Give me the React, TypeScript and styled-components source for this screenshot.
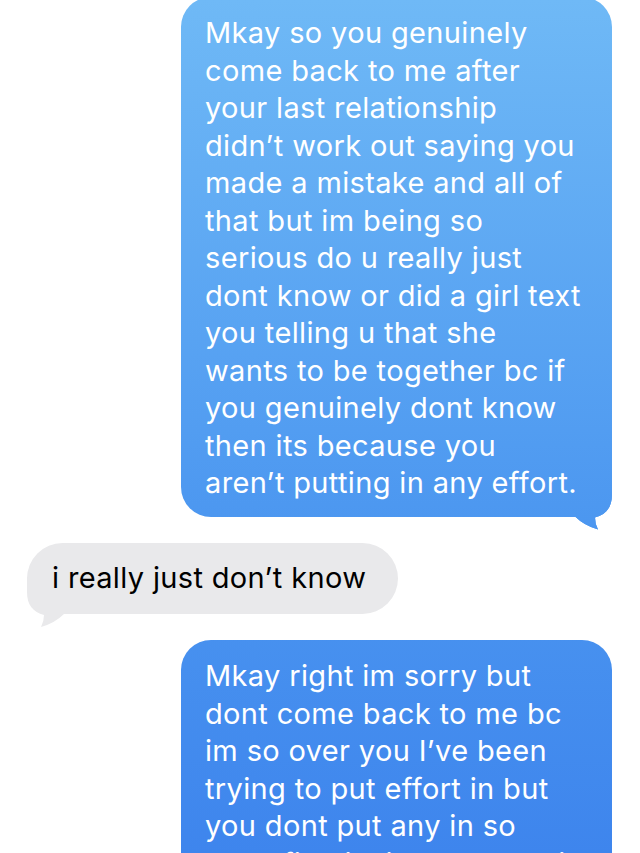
import styled, { createGlobalStyle } from "styled-components"

const Global = createGlobalStyle`
  html, body {
    margin: 0;
    padding: 0;
    height: 853px;
    overflow: hidden;
    background: #fff;
  }
`

const blueFill = `
  background-color: #4f99f1;
  background-image: linear-gradient(to bottom, #6fb9f6 0px, #4c97f0 520px, #3e85ed 853px);
  background-attachment: fixed;
`

const Thread = styled.div`
  display: flex;
  flex-direction: column;
  gap: 26px;
  padding: 0 28px 0 27px;
  margin-top: -3px;
  font-family: Inter, "Noto Sans", sans-serif;
`

const Bubble = styled.div<{ $mine?: boolean }>`
  position: relative;
  align-self: ${(p) => (p.$mine ? "flex-end" : "flex-start")};
  width: ${(p) => (p.$mine ? "431px" : "auto")};
  box-sizing: border-box;
  padding: ${(p) => (p.$mine ? "17px 24px 15px" : "16px 32px 18px 25px")};
  border-radius: ${(p) => (p.$mine ? "30px" : "36px")};
  color: ${(p) => (p.$mine ? "#fff" : "#000")};
  font-size: 29px;
  line-height: 37.5px;
  letter-spacing: 0.35px;
  ${(p) => (p.$mine ? blueFill : "background: #e9e9eb;")}

  &::after {
    content: "";
    position: absolute;
    bottom: -13px;
    width: 42px;
    height: 50px;
    ${(p) => (p.$mine ? "right: 0;" : "left: 0;")}
    ${(p) => (p.$mine ? blueFill : "background: #e9e9eb;")}
    clip-path: ${(p) =>
      p.$mine
        ? `path("M0 0 L42 0 L42 15 C42 28 36 35 25 38 Q25 44 28 50 Q14 46 5 37 L0 37 Z")`
        : `path("M42 0 L0 0 L0 15 C0 28 6 35 17 38 Q17 44 14 50 Q28 46 37 37 L42 37 Z")`};
  }
`

const Line = styled.span`
  display: block;
  white-space: nowrap;
  position: relative;
  z-index: 1;
`

const messages: { mine: boolean; lines: string[] }[] = [
  {
    mine: true,
    lines: [
      "Mkay so you genuinely",
      "come back to me after",
      "your last relationship",
      "didn’t work out saying you",
      "made a mistake and all of",
      "that but im being so",
      "serious do u really just",
      "dont know or did a girl text",
      "you telling u that she",
      "wants to be together bc if",
      "you genuinely dont know",
      "then its because you",
      "aren’t putting in any effort.",
    ],
  },
  { mine: false, lines: ["i really just don’t know"] },
  {
    mine: true,
    lines: [
      "Mkay right im sorry but",
      "dont come back to me bc",
      "im so over you I’ve been",
      "trying to put effort in but",
      "you dont put any in so",
      "thats fine its just over bc i",
    ],
  },
]

export default function App() {
  return (
    <>
      <Global />
      <Thread>
        {messages.map((m, i) => (
          <Bubble key={i} $mine={m.mine}>
            {m.lines.map((l, j) => (
              <Line key={j}>{l}</Line>
            ))}
          </Bubble>
        ))}
      </Thread>
    </>
  )
}
